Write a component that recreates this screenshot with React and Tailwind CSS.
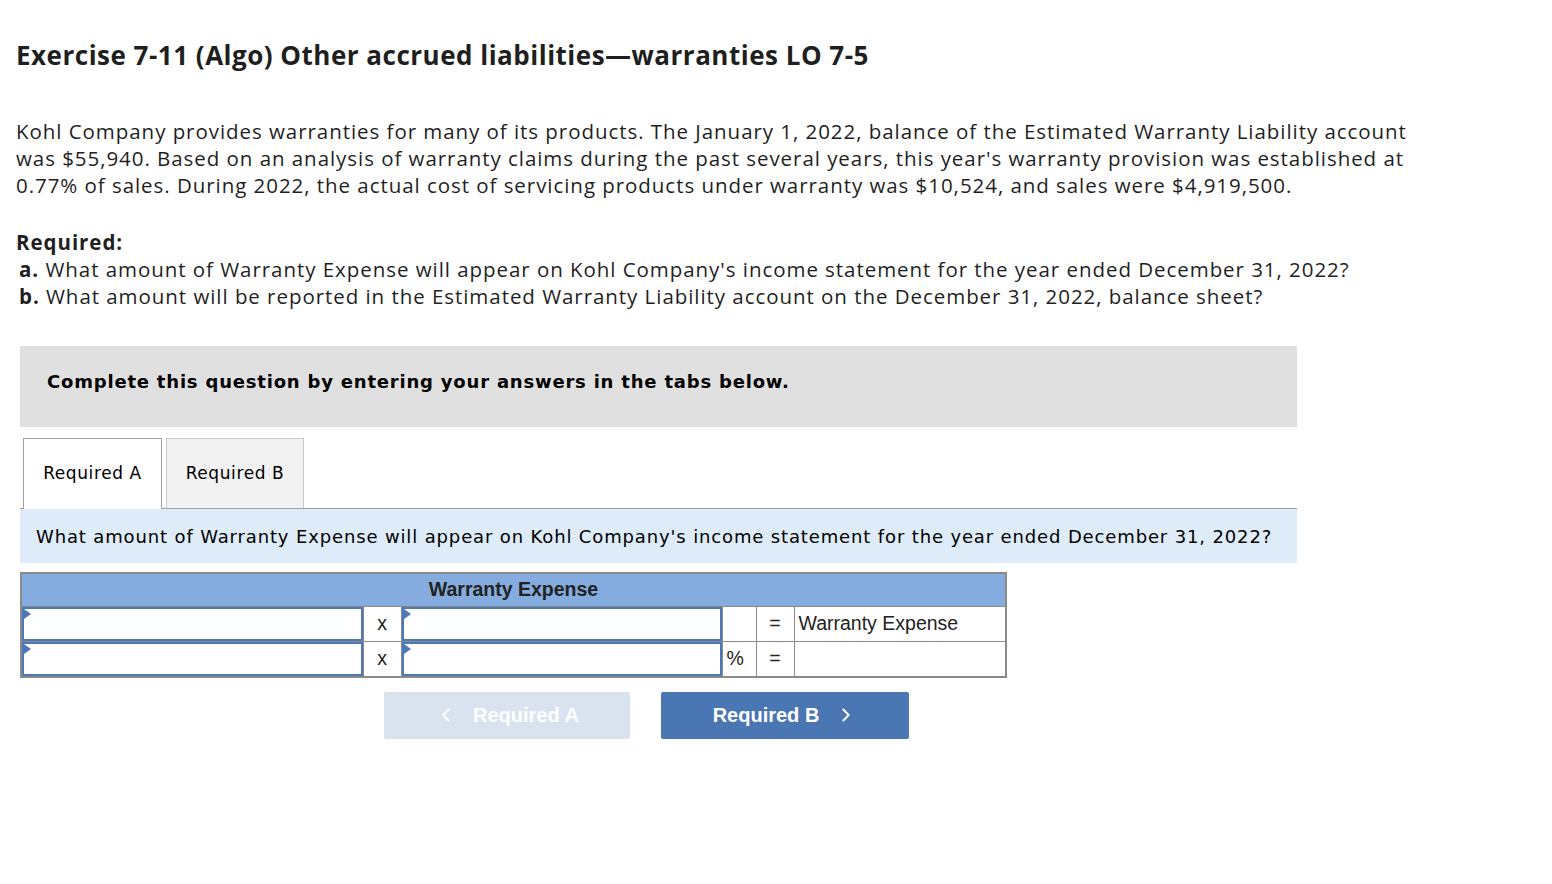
import { ChevronLeft, ChevronRight } from 'lucide-react';

const body = { fontFamily: '"Open Sans", Lato, sans-serif' };
const verdana = { fontFamily: '"DejaVu Sans", Verdana, sans-serif' };
const arial = { fontFamily: '"Liberation Sans", Arial, sans-serif' };

function Cell({ children, className = '' }) {
  return (
    <td className={`border border-[#8a8a8a] p-0 text-[19.5px] text-[#222] ${className}`}>{children}</td>
  );
}

function Input() {
  return (
    <div className="relative h-[34px] border-2 border-[#4d78b8] bg-white">
      <span className="absolute left-0 top-0 h-0 w-0 border-y-[5px] border-l-[7px] border-y-transparent border-l-[#4d78b8]" />
    </div>
  );
}

export default function App() {
  return (
    <main className="min-h-screen bg-white text-[#1f1f1f] px-4 pt-[38px]" style={body}>
      <h1 className="text-[26px] font-bold leading-[34px] tracking-[0.5px]">
        Exercise 7-11 (Algo) Other accrued liabilities—warranties LO 7-5
      </h1>

      <p className="mt-[46px] text-[20.5px] leading-[27px] tracking-[0.95px] whitespace-nowrap">
        Kohl Company provides warranties for many of its products. The January 1, 2022, balance of the Estimated Warranty Liability account<br />
        was $55,940. Based on an analysis of warranty claims during the past several years, this year's warranty provision was established at<br />
        0.77% of sales. During 2022, the actual cost of servicing products under warranty was $10,524, and sales were $4,919,500.
      </p>

      <div className="mt-[30px] text-[20.5px] leading-[27px] tracking-[0.95px] whitespace-nowrap">
        <div className="font-bold">Required:</div>
        <div className="pl-[3px]"><b>a.</b> What amount of Warranty Expense will appear on Kohl Company's income statement for the year ended December 31, 2022?</div>
        <div className="pl-[3px]"><b>b.</b> What amount will be reported in the Estimated Warranty Liability account on the December 31, 2022, balance sheet?</div>
      </div>

      <div className="ml-[4px] w-[1277px]" style={verdana}>
        <div className="mt-[36px] h-[81px] bg-[#e0e0e0] pl-[27px] pt-[22px] text-[18px] tracking-[0.8px] font-bold text-black">
          Complete this question by entering your answers in the tabs below.
        </div>

        <div className="mt-[11px] flex gap-[4px] border-b border-[#a0a0a0] pl-[3px]">
          <div className="-mb-px h-[71px] w-[139px] border border-b-0 border-[#a0a0a0] bg-white flex items-center justify-center text-[17px] tracking-[0.6px] text-black">
            Required A
          </div>
          <div className="h-[70px] w-[138px] border border-b-0 border-[#c8c8c8] bg-[#f2f2f2] flex items-center justify-center text-[17px] tracking-[0.6px] text-black">
            Required B
          </div>
        </div>

        <div className="h-[54px] bg-[#deebf8] pl-[16px] flex items-center text-[18px] tracking-[0.86px] text-black">
          What amount of Warranty Expense will appear on Kohl Company's income statement for the year ended December 31, 2022?
        </div>
      </div>

      <table className="ml-[4px] mt-[9px] w-[987px] border-collapse border-2 border-[#8a8a8a]" style={arial}>
        <colgroup>
          <col className="w-[342px]" />
          <col className="w-[38px]" />
          <col className="w-[321px]" />
          <col className="w-[34px]" />
          <col className="w-[38px]" />
          <col />
        </colgroup>
        <thead>
          <tr className="h-[33px]">
            <th colSpan={6} className="border border-[#8a8a8a] bg-[#84acdf] p-0 text-center text-[19.5px] font-bold text-[#222]">
              Warranty Expense
            </th>
          </tr>
        </thead>
        <tbody>
          <tr className="h-[35px]">
            <Cell><Input /></Cell>
            <Cell className="text-center">x</Cell>
            <Cell><Input /></Cell>
            <Cell />
            <Cell className="text-center">=</Cell>
            <Cell className="pl-[4px]">Warranty Expense</Cell>
          </tr>
          <tr className="h-[35px]">
            <Cell><Input /></Cell>
            <Cell className="text-center">x</Cell>
            <Cell><Input /></Cell>
            <Cell className="pl-[4px]">%</Cell>
            <Cell className="text-center">=</Cell>
            <Cell />
          </tr>
        </tbody>
      </table>

      <div className="mt-[14px] flex gap-[31px] pl-[368px]" style={arial}>
        <button className="flex h-[47px] w-[246px] items-center justify-center gap-[16px] rounded-[2px] bg-[#d9e3ef] text-[20px] font-bold text-white">
          <ChevronLeft className="h-[22px] w-[22px]" strokeWidth={2} />
          Required A
        </button>
        <button className="flex h-[47px] w-[248px] items-center justify-center gap-[16px] rounded-[2px] bg-[#4a76b4] text-[20px] font-bold text-white">
          Required B
          <ChevronRight className="h-[22px] w-[22px]" strokeWidth={2} />
        </button>
      </div>
    </main>
  );
}
